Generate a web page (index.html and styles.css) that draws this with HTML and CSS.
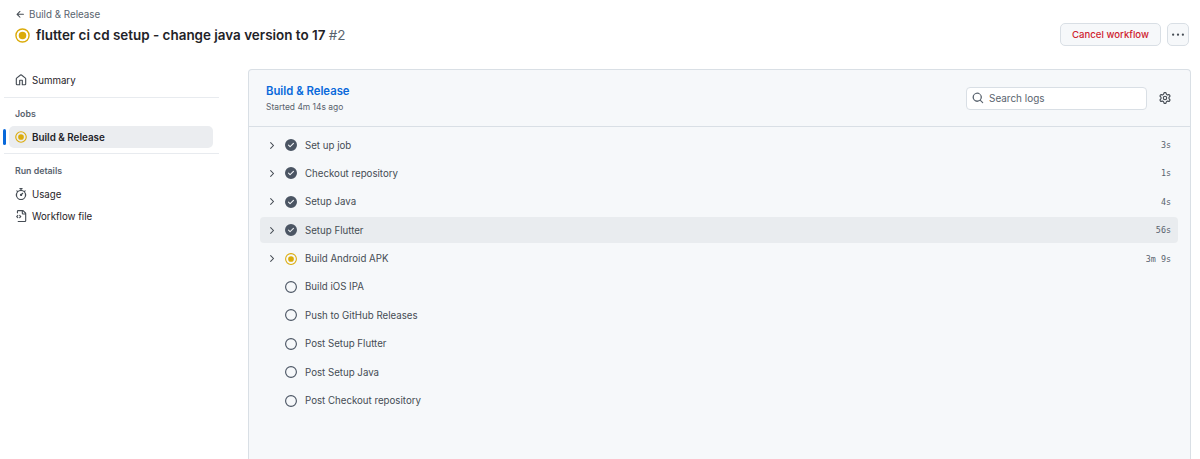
FILE: index.html
```html
<!DOCTYPE html>
<html lang="en">
<head>
<meta charset="utf-8">
<title>Build &amp; Release</title>
<link rel="stylesheet" href="styles.css">
</head>
<body>
<header class="top">
  <div class="top-left">
    <a class="crumb"><svg class="ic12" viewBox="0 0 16 16"><path d="M7.78 12.53a.75.75 0 0 1-1.06 0L2.47 8.28a.75.75 0 0 1 0-1.06l4.25-4.25a.75.75 0 0 1 1.06 1.06L4.81 7h7.44a.75.75 0 0 1 0 1.5H4.81l2.97 2.97a.75.75 0 0 1 0 1.06Z"/></svg>Build &amp; Release</a>
    <h1 class="title">
      <svg class="run-ic" viewBox="0 0 16 16"><circle cx="8" cy="8" r="7" fill="none" stroke="#dbab0a" stroke-width="1.5"/><circle cx="8" cy="8" r="4" fill="#dbab0a"/></svg>
      <span>flutter ci cd setup - change java version to 17 <span class="num">#2</span></span>
    </h1>
  </div>
  <div class="actions">
    <button class="btn danger">Cancel workflow</button>
    <button class="btn more"><svg class="ic14" viewBox="0 0 16 16"><path d="M8 9a1.5 1.5 0 1 0 0-3 1.5 1.5 0 0 0 0 3ZM1.5 9a1.5 1.5 0 1 0 0-3 1.5 1.5 0 0 0 0 3Zm13 0a1.5 1.5 0 1 0 0-3 1.5 1.5 0 0 0 0 3Z"/></svg></button>
  </div>
</header>
<div class="main">
  <nav class="side">
    <a class="nav-item"><svg class="ic14" viewBox="0 0 16 16"><path d="M6.906.664a1.749 1.749 0 0 1 2.187 0l5.25 4.2c.415.332.657.835.657 1.367v7.019A1.75 1.75 0 0 1 13.25 15h-3.5a.75.75 0 0 1-.75-.75V9H7v5.25a.75.75 0 0 1-.75.75h-3.5A1.75 1.75 0 0 1 1 13.25V6.23c0-.531.242-1.034.657-1.366l5.25-4.2Zm1.25 1.171a.25.25 0 0 0-.312 0l-5.25 4.2a.25.25 0 0 0-.094.196v7.019c0 .138.112.25.25.25H5.5V8.25a.75.75 0 0 1 .75-.75h3.5a.75.75 0 0 1 .75.75v5.25h2.75a.25.25 0 0 0 .25-.25V6.23a.25.25 0 0 0-.094-.195Z"/></svg>Summary</a>
    <hr class="rule rule-a">
    <div class="side-label">Jobs</div>
    <div class="job-row">
      <span class="marker"></span>
      <a class="job"><svg class="ic14" viewBox="0 0 16 16"><circle cx="8" cy="8" r="7" fill="none" stroke="#dbab0a" stroke-width="1.5"/><circle cx="8" cy="8" r="3.8" fill="#dbab0a"/></svg>Build &amp; Release</a>
    </div>
    <hr class="rule rule-b">
    <div class="side-label label-run">Run details</div>
    <a class="nav-item nav-usage"><svg class="ic14" viewBox="0 0 16 16"><path d="M5.75.75A.75.75 0 0 1 6.5 0h3a.75.75 0 0 1 0 1.5h-.75v1l-.001.041a6.724 6.724 0 0 1 3.464 1.435l.007-.006.75-.75a.75.75 0 1 1 1.06 1.06l-.75.75-.006.007a6.75 6.75 0 1 1-10.548 0L2.72 5.03l-.75-.75a.75.75 0 0 1 1.06-1.06l.75.75.007.006A6.72 6.72 0 0 1 7.25 2.541V1.5H6.5a.75.75 0 0 1-.75-.75ZM8 14.5a5.25 5.25 0 1 0-.001-10.501A5.25 5.25 0 0 0 8 14.5Zm.389-6.7 1.33-1.33a.75.75 0 1 1 1.061 1.06L9.45 8.861A1.503 1.503 0 0 1 8 10.75a1.499 1.499 0 1 1 .389-2.95Z"/></svg>Usage</a>
    <a class="nav-item nav-file"><svg class="ic14" viewBox="0 0 16 16"><path d="M2.5 1.75A1.75 1.75 0 0 1 4.25 0h6.086c.464 0 .909.184 1.237.513l2.914 2.914c.329.328.513.773.513 1.237v9.586A1.75 1.75 0 0 1 13.25 16h-9a.75.75 0 0 1 0-1.5h9a.25.25 0 0 0 .25-.25V6h-2.75A1.75 1.75 0 0 1 9 4.25V1.5H4.25a.25.25 0 0 0-.25.25v2a.75.75 0 0 1-1.5 0Zm8-.188V4.25c0 .138.112.25.25.25h2.688ZM5.72 6.72a.75.75 0 0 1 1.06 0l1.5 1.5a.75.75 0 0 1 0 1.06l-1.5 1.5a.75.75 0 0 1-1.06-1.06l.97-.97-.97-.97a.75.75 0 0 1 0-1.06Zm-1.44 0a.75.75 0 0 1 0 1.06l-.97.97.97.97a.75.75 0 0 1-1.06 1.06l-1.5-1.5a.75.75 0 0 1 0-1.06l1.5-1.5a.75.75 0 0 1 1.06 0Z"/></svg>Workflow file</a>
  </nav>
  <section class="panel">
    <div class="panel-head">
      <div>
        <h2 class="job-title">Build &amp; Release</h2>
        <div class="started">Started 4m 14s ago</div>
      </div>
      <div class="tools">
        <label class="search"><svg class="ic14" viewBox="0 0 16 16"><path d="M10.68 11.74a6 6 0 0 1-7.922-8.982 6 6 0 0 1 8.982 7.922l3.04 3.04a.749.749 0 0 1-.326 1.275.749.749 0 0 1-.734-.215ZM11.5 7a4.499 4.499 0 1 0-8.997 0A4.499 4.499 0 0 0 11.5 7Z"/></svg><input class="search-input" placeholder="Search logs"></label>
        <svg class="ic14 gear" viewBox="0 0 16 16"><path d="M8 0a8.2 8.2 0 0 1 .701.031C9.444.095 9.99.645 10.16 1.29l.288 1.107c.018.066.079.158.212.224.231.114.454.243.668.386.123.082.233.09.299.071l1.103-.303c.644-.176 1.392.021 1.82.63.27.385.506.792.704 1.218.315.675.111 1.422-.364 1.891l-.814.806c-.049.048-.098.147-.088.294.016.257.016.515 0 .772-.01.147.038.246.088.294l.814.806c.475.469.679 1.216.364 1.891a7.977 7.977 0 0 1-.704 1.217c-.428.61-1.176.807-1.82.63l-1.102-.302c-.067-.019-.177-.011-.3.071a5.909 5.909 0 0 1-.668.386c-.133.066-.194.158-.211.224l-.29 1.106c-.168.646-.715 1.196-1.458 1.26a8.006 8.006 0 0 1-1.402 0c-.743-.064-1.289-.614-1.458-1.26l-.289-1.106c-.018-.066-.079-.158-.212-.224a5.738 5.738 0 0 1-.668-.386c-.123-.082-.233-.09-.299-.071l-1.103.303c-.644.176-1.392-.021-1.82-.63a8.12 8.12 0 0 1-.704-1.218c-.315-.675-.111-1.422.363-1.891l.815-.806c.05-.048.098-.147.088-.294a6.214 6.214 0 0 1 0-.772c.01-.147-.038-.246-.088-.294l-.815-.806C.635 6.045.431 5.298.746 4.623a7.92 7.92 0 0 1 .704-1.217c.428-.61 1.176-.807 1.82-.63l1.102.302c.067.019.177.011.3-.071.214-.143.437-.272.668-.386.133-.066.194-.158.211-.224l.29-1.106C6.009.645 6.556.095 7.299.03 7.53.01 7.764 0 8 0Zm-.571 1.525c-.036.003-.108.036-.137.146l-.289 1.105c-.147.561-.549.967-.998 1.189-.173.086-.34.183-.5.29-.417.278-.97.423-1.529.27l-1.103-.303c-.109-.03-.175.016-.195.045-.22.312-.412.644-.573.99-.014.031-.021.11.059.19l.815.806c.411.406.562.957.53 1.456a4.709 4.709 0 0 0 0 .582c.032.499-.119 1.05-.53 1.456l-.815.806c-.081.08-.073.159-.059.19.162.346.353.677.573.989.02.03.085.076.195.046l1.102-.303c.56-.153 1.113-.008 1.53.27.161.107.328.204.501.29.447.222.85.629.997 1.189l.289 1.105c.029.109.101.143.137.146a6.6 6.6 0 0 0 1.142 0c.036-.003.108-.036.137-.146l.289-1.105c.147-.561.549-.967.998-1.189.173-.086.34-.183.5-.29.417-.278.97-.423 1.529-.27l1.103.303c.109.029.175-.016.195-.045.22-.313.411-.644.573-.99.014-.031.021-.11-.059-.19l-.815-.806c-.411-.406-.562-.957-.53-1.456a4.709 4.709 0 0 0 0-.582c-.032-.499.119-1.05.53-1.456l.815-.806c.081-.08.073-.159.059-.19a6.464 6.464 0 0 0-.573-.989c-.02-.03-.085-.076-.195-.046l-1.102.303c-.56.153-1.113.008-1.53-.27a4.44 4.44 0 0 0-.501-.29c-.447-.222-.85-.629-.997-1.189l-.289-1.105c-.029-.11-.101-.143-.137-.146a6.6 6.6 0 0 0-1.142 0ZM11 8a3 3 0 1 1-6 0 3 3 0 0 1 6 0ZM9.5 8a1.5 1.5 0 1 0-3.001.001A1.5 1.5 0 0 0 9.5 8Z"/></svg>
      </div>
    </div>
    <div class="steps">
      <div class="step"><svg class="chev" viewBox="0 0 16 16"><path d="M6.22 3.22a.75.75 0 0 1 1.06 0l4.25 4.25a.75.75 0 0 1 0 1.06l-4.25 4.25a.75.75 0 0 1-1.06-1.06L9.94 8 6.22 4.28a.75.75 0 0 1 0-1.06Z"/></svg><svg class="st" viewBox="0 0 16 16"><path class="done" d="M8 16A8 8 0 1 1 8 0a8 8 0 0 1 0 16Zm3.78-9.72a.75.75 0 0 0-1.06-1.06L6.75 9.19 5.28 7.72a.75.75 0 0 0-1.06 1.06l2 2a.75.75 0 0 0 1.06 0Z"/></svg><span class="name">Set up job</span><span class="time">3s</span></div>
      <div class="step"><svg class="chev" viewBox="0 0 16 16"><path d="M6.22 3.22a.75.75 0 0 1 1.06 0l4.25 4.25a.75.75 0 0 1 0 1.06l-4.25 4.25a.75.75 0 0 1-1.06-1.06L9.94 8 6.22 4.28a.75.75 0 0 1 0-1.06Z"/></svg><svg class="st" viewBox="0 0 16 16"><path class="done" d="M8 16A8 8 0 1 1 8 0a8 8 0 0 1 0 16Zm3.78-9.72a.75.75 0 0 0-1.06-1.06L6.75 9.19 5.28 7.72a.75.75 0 0 0-1.06 1.06l2 2a.75.75 0 0 0 1.06 0Z"/></svg><span class="name">Checkout repository</span><span class="time">1s</span></div>
      <div class="step"><svg class="chev" viewBox="0 0 16 16"><path d="M6.22 3.22a.75.75 0 0 1 1.06 0l4.25 4.25a.75.75 0 0 1 0 1.06l-4.25 4.25a.75.75 0 0 1-1.06-1.06L9.94 8 6.22 4.28a.75.75 0 0 1 0-1.06Z"/></svg><svg class="st" viewBox="0 0 16 16"><path class="done" d="M8 16A8 8 0 1 1 8 0a8 8 0 0 1 0 16Zm3.78-9.72a.75.75 0 0 0-1.06-1.06L6.75 9.19 5.28 7.72a.75.75 0 0 0-1.06 1.06l2 2a.75.75 0 0 0 1.06 0Z"/></svg><span class="name">Setup Java</span><span class="time">4s</span></div>
      <div class="step hover"><svg class="chev" viewBox="0 0 16 16"><path d="M6.22 3.22a.75.75 0 0 1 1.06 0l4.25 4.25a.75.75 0 0 1 0 1.06l-4.25 4.25a.75.75 0 0 1-1.06-1.06L9.94 8 6.22 4.28a.75.75 0 0 1 0-1.06Z"/></svg><svg class="st" viewBox="0 0 16 16"><path class="done" d="M8 16A8 8 0 1 1 8 0a8 8 0 0 1 0 16Zm3.78-9.72a.75.75 0 0 0-1.06-1.06L6.75 9.19 5.28 7.72a.75.75 0 0 0-1.06 1.06l2 2a.75.75 0 0 0 1.06 0Z"/></svg><span class="name">Setup Flutter</span><span class="time">56s</span></div>
      <div class="step"><svg class="chev" viewBox="0 0 16 16"><path d="M6.22 3.22a.75.75 0 0 1 1.06 0l4.25 4.25a.75.75 0 0 1 0 1.06l-4.25 4.25a.75.75 0 0 1-1.06-1.06L9.94 8 6.22 4.28a.75.75 0 0 1 0-1.06Z"/></svg><svg class="st" viewBox="0 0 16 16"><circle cx="8" cy="8" r="7.2" fill="none" stroke="#dbab0a" stroke-width="1.4"/><circle cx="8" cy="8" r="3.8" fill="#dbab0a"/></svg><span class="name">Build Android APK</span><span class="time">3m 9s</span></div>
      <div class="step pending"><svg class="st" viewBox="0 0 16 16"><circle cx="8" cy="8" r="7.2" fill="none" stroke="#4b5563" stroke-width="1.5"/></svg><span class="name">Build iOS IPA</span></div>
      <div class="step pending"><svg class="st" viewBox="0 0 16 16"><circle cx="8" cy="8" r="7.2" fill="none" stroke="#4b5563" stroke-width="1.5"/></svg><span class="name">Push to GitHub Releases</span></div>
      <div class="step pending"><svg class="st" viewBox="0 0 16 16"><circle cx="8" cy="8" r="7.2" fill="none" stroke="#4b5563" stroke-width="1.5"/></svg><span class="name">Post Setup Flutter</span></div>
      <div class="step pending"><svg class="st" viewBox="0 0 16 16"><circle cx="8" cy="8" r="7.2" fill="none" stroke="#4b5563" stroke-width="1.5"/></svg><span class="name">Post Setup Java</span></div>
      <div class="step pending"><svg class="st" viewBox="0 0 16 16"><circle cx="8" cy="8" r="7.2" fill="none" stroke="#4b5563" stroke-width="1.5"/></svg><span class="name">Post Checkout repository</span></div>
    </div>
  </section>
</div>
</body>
</html>
```

FILE: styles.css
```css
* { box-sizing: border-box; }
html, body { margin: 0; height: 459px; overflow: hidden; }
body {
  background: #fff;
  color: #1f2328;
  font-family: Inter, "Liberation Sans", sans-serif;
  font-size: 9.8px;
}
svg { fill: currentColor; flex: none; display: block; }
.ic12 { width: 11px; height: 11px; }
.ic14 { width: 12px; height: 12px; }

.top {
  display: flex;
  justify-content: space-between;
  padding: 8px 11px 0 15px;
  height: 69px;
}
.crumb {
  display: flex;
  align-items: center;
  gap: 3px;
  height: 13px;
  color: #59636e;
  font-size: 9.8px;
}
.crumb svg { color: #454c54; }
.title {
  display: flex;
  align-items: center;
  gap: 6px;
  margin: 5px 0 0;
  height: 18px;
  font-size: 13.45px;
  font-weight: 600;
  color: #1f2328;
  white-space: nowrap;
}
.run-ic { width: 15px; height: 15px; }
.num { font-weight: 400; color: #59636e; }
.actions { display: flex; gap: 6px; margin-top: 15px; height: 23px; }
.btn {
  font-family: inherit;
  font-size: 9.6px;
  font-weight: 500;
  background: #f6f8fa;
  border: 1px solid #d9dfe5;
  border-radius: 5px;
  padding: 0;
}
.danger { width: 101px; color: #cf222e; }
.more { width: 22px; color: #454c54; display: flex; align-items: center; justify-content: center; }

.main { display: flex; height: 390px; }
.side { width: 248px; flex: none; padding: 0 29px 0 4px; }
.nav-item {
  display: flex;
  align-items: center;
  gap: 5px;
  height: 22px;
  padding-left: 11px;
  color: #1f2328;
  font-size: 9.7px;
}
.nav-item svg { color: #454c54; }
.rule { border: 0; height: 1px; background: #e8ebef; margin: 0; }
.rule-a { margin-top: 6px; }
.side-label {
  margin-top: 10px;
  padding-left: 11px;
  font-size: 8.8px;
  font-weight: 600;
  color: #59636e;
  height: 12px;
  line-height: 12px;
}
.job-row { position: relative; margin-top: 6px; padding-left: 5px; padding-right: 6px; }
.marker {
  position: absolute;
  left: -1px;
  top: 3px;
  width: 3px;
  height: 16px;
  background: #0969da;
  border-radius: 2px;
}
.job {
  display: flex;
  align-items: center;
  gap: 5px;
  height: 22px;
  padding-left: 6px;
  background: #ebedf0;
  border-radius: 5px;
  font-weight: 600;
  font-size: 9.85px;
}
.rule-b { margin-top: 5px; }
.label-run { margin-top: 11px; }
.nav-usage { margin-top: 6px; }
.nav-file { margin-top: 0; }

.panel {
  width: 943px;
  flex: none;
  background: #f6f8fa;
  border: 1px solid #d9dfe5;
  border-bottom: 0;
  border-radius: 4px 4px 0 0;
}
.panel-head {
  display: flex;
  justify-content: space-between;
  align-items: center;
  height: 57px;
  padding: 0 19px 0 17px;
  border-bottom: 1px solid #d9dfe5;
}
.job-title {
  margin: 0;
  font-size: 11.3px;
  font-weight: 600;
  color: #0969da;
  line-height: 14px;
}
.started { margin-top: 3px; font-size: 8.45px; color: #59636e; line-height: 12px; }
.tools { display: flex; align-items: center; gap: 12px; }
.search {
  display: flex;
  align-items: center;
  gap: 5px;
  width: 181px;
  height: 23px;
  padding-left: 5px;
  background: #fff;
  border: 1px solid #d9dfe5;
  border-radius: 4px;
  color: #59636e;
}
.search-input {
  border: 0;
  outline: 0;
  background: none;
  width: 140px;
  padding: 0;
  font: 9.95px Inter, "Liberation Sans", sans-serif;
}
.search-input::placeholder { color: #59636e; opacity: 1; }
.gear { color: #454c54; }

.steps {
  display: flex;
  flex-direction: column;
  gap: 2.4px;
  padding: 5px 12px 0 11px;
}
.step {
  display: flex;
  align-items: center;
  height: 26px;
  padding: 0 7px 0 6px;
  border-radius: 4px;
  color: #454c54;
  font-size: 9.7px;
}
.hover { background: #e9ecef; }
.chev { width: 11px; height: 11px; color: #454c54; }
.st { width: 12px; height: 12px; margin-left: 8px; }
.pending .st { margin-left: 19px; }
.done { fill: #4b5563; }
.name { margin-left: 8px; flex: 1; }
.time { font-family: "DejaVu Sans Mono", monospace; font-size: 8.4px; color: #59636e; }
```
